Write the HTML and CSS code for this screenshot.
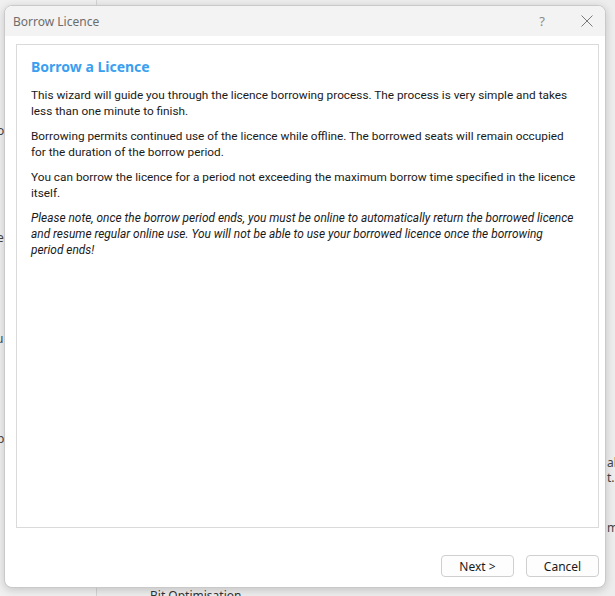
FILE: index.html
```html
<!DOCTYPE html>
<html lang="en">
<head>
    <meta charset="UTF-8">
    <title>Borrow Licence</title>
    <link rel="stylesheet" href="styles.css">
</head>
<body>
    <div class="backdrop">
        <div class="side"></div>
        <div class="main">
            <span class="frag frag-bit">Bit Optimisation</span>
            <span class="frag frag-r1">al</span>
            <span class="frag frag-r2">t.</span>
            <span class="frag frag-r3">m</span>
        </div>
        <span class="frag frag-l1">o</span>
        <span class="frag frag-l2">e</span>
        <span class="frag frag-l3">u</span>
        <span class="frag frag-l4">p</span>
    </div>

    <div class="dialog">
        <div class="titlebar">
            <span class="title">Borrow Licence</span>
            <span class="help">?</span>
            <svg class="close" width="12" height="12" viewBox="0 0 12 12">
                <path d="M0.5 0.5 L11.5 11.5 M11.5 0.5 L0.5 11.5" stroke="#7a7a7a" stroke-width="1" fill="none"/>
            </svg>
        </div>
        <div class="content">
            <div class="panel">
                <h1>Borrow a Licence</h1>
                <p>This wizard will guide you through the licence borrowing process. The process is very simple and takes less than one minute to finish.</p>
                <p>Borrowing permits continued use of the licence while offline. The borrowed seats will remain occupied for the duration of the borrow period.</p>
                <p>You can borrow the licence for a period not exceeding the maximum borrow time specified in the licence itself.</p>
                <p class="note">Please note, once the borrow period ends, you must be online to automatically return the borrowed licence and resume regular online use. You will not be able to use your borrowed licence once the borrowing period ends!</p>
            </div>
            <div class="actions">
                <button class="btn">Next &gt;</button>
                <button class="btn">Cancel</button>
            </div>
        </div>
    </div>
</body>
</html>
```

FILE: styles.css
```css
body {
    margin: 0;
    width: 615px;
    height: 596px;
    overflow: hidden;
    font-family: "Noto Sans", "Open Sans", sans-serif;
    font-size: 12px;
    color: #1a1a1a;
    background-color: #f0f0f0;
}
.backdrop {
    position: relative;
    display: flex;
    height: 596px;
}
.side {
    width: 96px;
    background-color: #f0f0f0;
    border-right: 1px solid #d4d4d4;
}
.main {
    flex: 1;
    background-color: #ededed;
}
.frag {
    position: absolute;
    color: #444;
    font-size: 12px;
    line-height: 13px;
}
.frag-bit { left: 150px; top: 589px; color: #333; }
.frag-r1 { left: 607px; top: 456px; }
.frag-r2 { left: 607px; top: 471px; }
.frag-r3 { left: 607px; top: 521px; }
.frag-l1 { left: -3px; top: 124px; }
.frag-l2 { left: -3px; top: 231px; }
.frag-l3 { left: -4px; top: 332px; }
.frag-l4 { left: -3px; top: 432px; }

.dialog {
    position: absolute;
    left: 4px;
    top: 5px;
    width: 600px;
    height: 581px;
    border: 1px solid #c9c9c9;
    border-radius: 8px;
    background-color: #fff;
    box-shadow: 0 2px 8px rgba(0, 0, 0, 0.18);
    overflow: hidden;
    display: flex;
    flex-direction: column;
}
.titlebar {
    height: 30px;
    background-color: #f3f3f3;
    display: flex;
    align-items: center;
    padding-left: 8px;
    flex-shrink: 0;
}
.title {
    flex: 1;
    color: #6d6d6d;
    font-size: 12px;
}
.help {
    color: #8a8a8a;
    font-size: 13px;
    margin-right: 36px;
}
.close {
    margin-right: 12px;
}
.content {
    flex: 1;
    display: flex;
    flex-direction: column;
    padding: 8px 6px 10px 11px;
}
.panel {
    flex: 1;
    border: 1px solid #dadada;
    padding: 12px 21px 11px 14px;
}
h1 {
    margin: 0 0 11px;
    font-size: 14px;
    font-weight: bold;
    color: #3a9ff0;
}
p {
    margin: 0 0 9px;
    font-family: Roboto, "Noto Sans", sans-serif;
    font-size: 11.8px;
    line-height: 16px;
}
.note {
    font-size: 11.9px;
    font-style: italic;
}
.actions {
    display: flex;
    justify-content: flex-end;
    gap: 12px;
    padding-top: 27px;
}
.btn {
    width: 73px;
    height: 22px;
    font-family: inherit;
    font-size: 12px;
    color: #1a1a1a;
    background-color: #fdfdfd;
    border: 1px solid #cfcfcf;
    border-radius: 4px;
    padding: 0;
}
```
